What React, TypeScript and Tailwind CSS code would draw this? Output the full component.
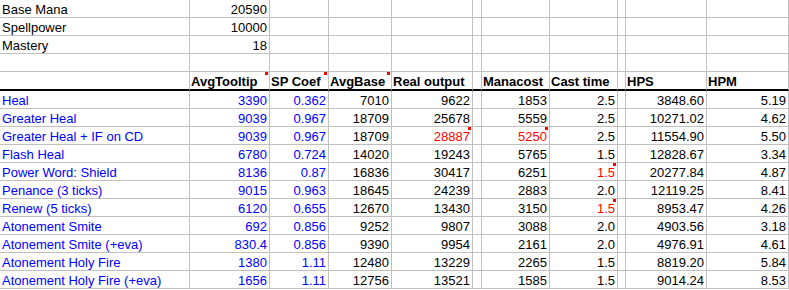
import React from 'react';

type Cell = {
  v?: string;
  align?: 'left' | 'right';
  color?: 'blue' | 'red' | 'black';
  note?: boolean;
  bold?: boolean;
};

// column widths include the 1px right gridline
const gridCols =
  'grid grid-cols-[190px_80px_59px_63px_81px_9px_68px_68px_8px_81px_82px]';

const colors: Record<string, string> = {
  blue: 'text-[#0000ff]',
  red: 'text-[#ff0000]',
  black: 'text-black',
};

const inputs: [string, string][] = [
  ['Base Mana', '20590'],
  ['Spellpower', '10000'],
  ['Mastery', '18'],
];

const headers: Cell[] = [
  {},
  { v: 'AvgTooltip', note: true },
  { v: 'SP Coef', note: true },
  { v: 'AvgBase', note: true },
  { v: 'Real output' },
  {},
  { v: 'Manacost' },
  { v: 'Cast time' },
  {},
  { v: 'HPS' },
  { v: 'HPM' },
];

// name, tooltip, coef, base, output, manacost, cast, hps, hpm
const spells: string[][] = [
  ['Heal', '3390', '0.362', '7010', '9622', '1853', '2.5', '3848.60', '5.19'],
  ['Greater Heal', '9039', '0.967', '18709', '25678', '5559', '2.5', '10271.02', '4.62'],
  ['Greater Heal + IF on CD', '9039', '0.967', '18709', '28887*', '5250*', '2.5', '11554.90', '5.50'],
  ['Flash Heal', '6780', '0.724', '14020', '19243', '5765', '1.5', '12828.67', '3.34'],
  ['Power Word: Shield', '8136', '0.87', '16836', '30417', '6251', '1.5*', '20277.84', '4.87'],
  ['Penance (3 ticks)', '9015', '0.963', '18645', '24239', '2883', '2.0', '12119.25', '8.41'],
  ['Renew (5 ticks)', '6120', '0.655', '12670', '13430', '3150', '1.5*', '8953.47', '4.26'],
  ['Atonement Smite', '692', '0.856', '9252', '9807', '3088', '2.0', '4903.56', '3.18'],
  ['Atonement Smite (+eva)', '830.4', '0.856', '9390', '9954', '2161', '2.0', '4976.91', '4.61'],
  ['Atonement Holy Fire', '1380', '1.11', '12480', '13229', '2265', '1.5', '8819.20', '5.84'],
  ['Atonement Holy Fire (+eva)', '1656', '1.11', '12756', '13521', '1585', '1.5', '9014.24', '8.53'],
];

function toCells(r: string[]): Cell[] {
  const num = (s: string, color: Cell['color']): Cell => {
    const flagged = s.endsWith('*');
    return {
      v: flagged ? s.slice(0, -1) : s,
      align: 'right',
      color: flagged ? 'red' : color,
      note: flagged,
    };
  };
  return [
    { v: r[0], color: 'blue' },
    num(r[1], 'blue'),
    num(r[2], 'blue'),
    num(r[3], 'black'),
    num(r[4], 'black'),
    {},
    num(r[5], 'black'),
    num(r[6], 'black'),
    {},
    num(r[7], 'black'),
    num(r[8], 'black'),
  ];
}

function SheetCell({ cell, first, header }: { cell: Cell; first: boolean; header?: boolean }) {
  const border = header
    ? 'border-r border-r-[#c0c0c0] border-b-2 border-b-black h-[19px]'
    : 'border-r border-b border-[#c0c0c0] h-[18px]';
  return (
    <div
      className={`relative overflow-hidden whitespace-nowrap leading-[19px] ${border} ${
        first ? 'pl-[2px]' : 'pl-[1px]'
      } pr-[2px] ${cell.align === 'right' ? 'text-right' : 'text-left'} ${
        colors[cell.color ?? 'black']
      } ${header ? 'font-bold' : ''}`}
    >
      {cell.v}
      {cell.note && <span className="absolute top-0 right-[1px] w-[3px] h-[3px] bg-[#ff0000]" />}
    </div>
  );
}

export default function App() {
  const topRows: Cell[][] = [
    ...inputs.map(([k, v]) => [{ v: k }, { v, align: 'right' as const }]),
    [],
  ];

  return (
    <div
      className="w-[789px] h-[290px] bg-white overflow-hidden text-[13px] text-black"
      style={{ fontFamily: '"Liberation Sans", Arial, sans-serif' }}
    >
      <div className={gridCols}>
        {topRows.map((row, i) =>
          Array.from({ length: 11 }).map((_, j) => (
            <SheetCell key={`t${i}-${j}`} cell={row[j] ?? {}} first={j === 0} />
          ))
        )}
        {headers.map((c, j) => (
          <SheetCell key={`h${j}`} cell={c} first={j === 0} header />
        ))}
        {spells.map((r, i) =>
          toCells(r).map((c, j) => <SheetCell key={`r${i}-${j}`} cell={c} first={j === 0} />)
        )}
      </div>
    </div>
  );
}
